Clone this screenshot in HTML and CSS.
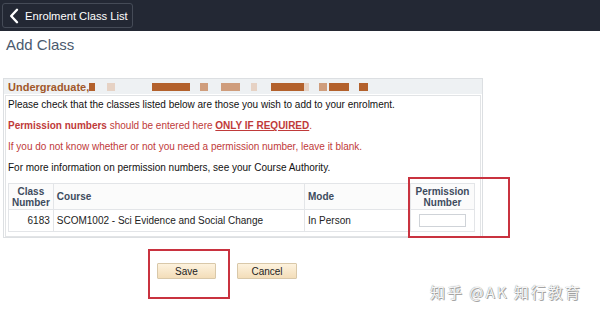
FILE: index.html
```html
<!DOCTYPE html>
<html lang="en">
<head>
    <meta charset="UTF-8">
    <meta name="viewport" content="width=device-width, initial-scale=1.0">
    <title>Add Class</title>
    <link rel="stylesheet" href="styles.css">
</head>
<body>
    <div class="topbar">
        <a class="back-btn" href="#">
            <svg class="chevron" width="10" height="16" viewBox="0 0 10 16">
                <path d="M8 1.8 L2.2 8 L8 14.2" fill="none" stroke="#fff" stroke-width="2.4" stroke-linecap="round" stroke-linejoin="round"/>
            </svg>
            <span>Enrolment Class List</span>
        </a>
    </div>

    <h1 class="page-title">Add Class</h1>

    <div class="panel">
        <div class="panel-header">
            <span class="career">Undergraduate,</span>
            <div class="blur">
                <i class="b dark" style="width:6px"></i>
                <i class="b pale" style="width:8px;margin-left:12px"></i>
                <i class="b dark" style="width:38px;margin-left:37px"></i>
                <i class="b mid" style="width:8px;margin-left:10px"></i>
                <i class="b mid" style="width:19px;margin-left:13px"></i>
                <i class="b pale" style="width:6px;margin-left:11px"></i>
                <i class="b dark" style="width:33px;margin-left:14px"></i>
                <i class="b pale" style="width:5px"></i>
                <i class="b mid" style="width:8px;margin-left:10px"></i>
                <i class="b dark" style="width:20px;margin-left:2px"></i>
                <i class="b dark" style="width:9px;margin-left:10px"></i>
            </div>
        </div>
        <div class="panel-body">
            <p>Please check that the classes listed below are those you wish to add to your enrolment.</p>
            <p class="warn"><b>Permission numbers</b> should be entered here <b><u>ONLY IF REQUIRED</u></b>.</p>
            <p class="warn">If you do not know whether or not you need a permission number, leave it blank.</p>
            <p>For more information on permission numbers, see your Course Authority.</p>

            <table class="classes">
                <thead>
                    <tr>
                        <th class="col-num">Class<br>Number</th>
                        <th class="col-course">Course</th>
                        <th class="col-mode">Mode</th>
                        <th class="col-perm">Permission<br>Number</th>
                    </tr>
                </thead>
                <tbody>
                    <tr>
                        <td class="num">6183</td>
                        <td>SCOM1002 - Sci Evidence and Social Change</td>
                        <td>In Person</td>
                        <td class="perm"><input type="text" class="perm-input"></td>
                    </tr>
                </tbody>
            </table>
        </div>
    </div>

    <div class="actions">
        <button class="btn">Save</button>
        <button class="btn">Cancel</button>
    </div>

    <!-- annotation boxes from the screenshot -->
    <div class="mark mark-perm"></div>
    <div class="mark mark-save"></div>

    <div class="watermark">知乎 @AK 知行教育</div>
</body>
</html>
```

FILE: styles.css
```css
* {
    margin: 0;
    padding: 0;
    box-sizing: border-box;
}

body {
    font-family: "Liberation Sans", Arial, sans-serif;
    background: #fff;
    width: 600px;
    height: 317px;
    position: relative;
    overflow: hidden;
    color: #111;
}

.topbar {
    height: 31px;
    background: #232834;
    padding: 3px 2px;
}

.back-btn {
    display: flex;
    align-items: center;
    gap: 6px;
    width: 131px;
    height: 25px;
    padding-left: 6px;
    border: 1px solid #454b57;
    border-radius: 3px;
    color: #fff;
    text-decoration: none;
    font-size: 11.2px;
    white-space: nowrap;
}

.page-title {
    font-size: 15px;
    font-weight: normal;
    color: #4b5a6e;
    padding: 5px 0 0 6px;
    height: 47px;
}

.panel {
    margin-left: 3px;
    width: 480px;
    border: 1px solid #dcdfe2;
}

.panel-header {
    display: flex;
    align-items: center;
    height: 15px;
    background: #eef1f3;
    padding-left: 4px;
}

.career {
    color: #a1582a;
    font-weight: bold;
    font-size: 11px;
}

.blur {
    display: flex;
    align-items: center;
}

.b {
    display: block;
    height: 8px;
}

.b.dark { background: #b3612c; }
.b.mid { background: #cf9d7c; }
.b.pale { background: #e6d2c4; }

.panel-body {
    margin: 1px 1px 0;
    border: 1px solid #e2e4e6;
    padding: 3px 5px 4px 2px;
}

.panel-body p {
    font-size: 10px;
    line-height: 12px;
    margin-bottom: 9px;
}

.panel-body .warn {
    color: #c03a3a;
}

.classes {
    width: 100%;
    border-collapse: collapse;
    border: 1px solid #dadcdf;
    font-size: 10px;
}

.classes th {
    color: #3e4b5e;
    font-weight: bold;
    text-align: left;
    height: 26px;
    line-height: 11px;
    padding: 0 3px;
    border: 1px solid #e3e5e8;
    background: #fbfbfb;
}

.classes th.col-num,
.classes th.col-perm {
    text-align: center;
}

.col-num { width: 42px; }
.col-mode { width: 106px; }
.col-perm { width: 64px; }

.classes td {
    height: 22px;
    padding: 0 3px;
    border: 1px solid #e3e5e8;
    color: #222;
}

.classes td.num {
    text-align: right;
}

.classes td.perm {
    text-align: center;
}

.perm-input {
    width: 47px;
    height: 13px;
    border: 1px solid #cfd3d8;
    background: #fff;
    vertical-align: middle;
}

.actions {
    display: flex;
    gap: 21px;
    padding: 25px 0 0 157px;
}

.btn {
    font-family: "Liberation Sans", Arial, sans-serif;
    font-size: 10px;
    color: #222;
    width: 59px;
    height: 16px;
    border: 1px solid #d9c8a9;
    border-radius: 1px;
    background: linear-gradient(#fdf2de, #f3ddb9);
}

.btn + .btn {
    width: 60px;
}

.mark {
    position: absolute;
    border: 2px solid #c9323f;
}

.mark-perm {
    left: 408px;
    top: 177px;
    width: 102px;
    height: 61px;
}

.mark-save {
    left: 148px;
    top: 249px;
    width: 82px;
    height: 50px;
}

.watermark {
    position: absolute;
    left: 430px;
    top: 281px;
    font-family: "Noto Sans CJK SC", sans-serif;
    font-size: 15px;
    color: #f6f6f6;
    text-shadow: 0 0 1px #777, 1px 1px 0 #aaa;
    letter-spacing: 2px;
}
```
